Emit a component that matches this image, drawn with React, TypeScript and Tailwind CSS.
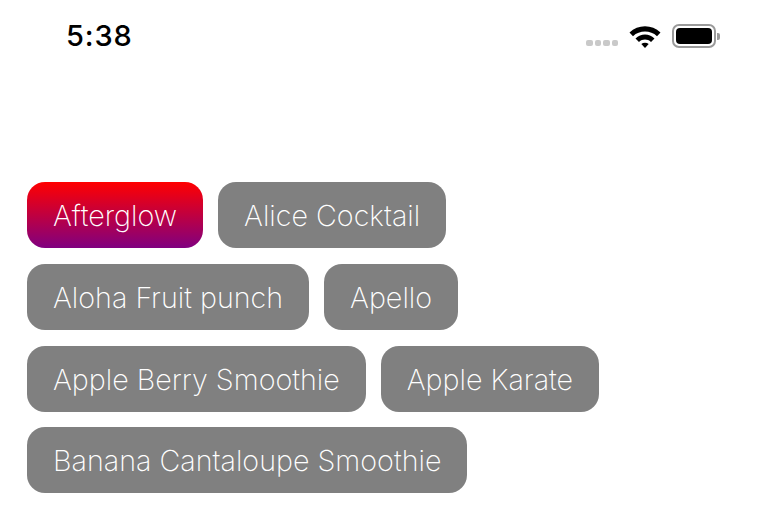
import React from "react";

const drinks = [
	"Afterglow",
	"Alice Cocktail",
	"Aloha Fruit punch",
	"Apello",
	"Apple Berry Smoothie",
	"Apple Karate",
	"Banana Cantaloupe Smoothie",
];

function StatusIcons() {
	return (
		<div className="flex items-center">
			<div className="flex gap-[2px] mt-[14px] mr-[11px]">
				<span className="w-[6.5px] h-[6.5px] rounded-[2px] bg-[#c9c9c9]" />
				<span className="w-[6.5px] h-[6.5px] rounded-[2px] bg-[#c9c9c9]" />
				<span className="w-[6.5px] h-[6.5px] rounded-[2px] bg-[#c9c9c9]" />
				<span className="w-[6.5px] h-[6.5px] rounded-[2px] bg-[#c9c9c9]" />
			</div>
			<svg width="32" height="24" viewBox="0 0 32 24" className="mr-[11px]">
				<path d="M0.5 8.5 C9 0 23 0 31.5 8.5 L28 12.2 C21.5 6 10.5 6 4 12.2 Z" fill="#000" />
				<path d="M6.5 14.5 C12 9.3 20 9.3 25.5 14.5 L22 18 C18.5 14.8 13.5 14.8 10 18 Z" fill="#000" />
				<path d="M12.3 20 C14.5 18.2 17.5 18.2 19.7 20 L16 24 Z" fill="#000" />
			</svg>
			<div className="w-[44px] h-[24px] rounded-[7px] border-2 border-[#9a9a9a] p-[2px]">
				<div className="w-full h-full rounded-[4px] bg-black" />
			</div>
			<span className="w-[3px] h-[7px] ml-[1px] rounded-r-[2px] bg-[#9a9a9a]" />
		</div>
	);
}

export default function App() {
	return (
		<div className="w-[765px] h-[505px] overflow-hidden bg-white font-['Inter',sans-serif]">
			<div className="flex items-center justify-between h-[72px] pl-[66px] pr-[45px]">
				<span className="text-[29px] font-[550] text-black tracking-[0.9px]">5:38</span>
				<StatusIcons />
			</div>
			<div className="flex flex-wrap gap-x-[15px] gap-y-[15.8px] pt-[110px] pl-[27px] pr-[100px]">
				{drinks.map((name, i) => (
					<button
						key={name}
						className={
							i === 0
								? "h-[66px] px-[26px] rounded-[18px] bg-linear-to-b/srgb from-[#ff0000] to-[#800080] text-white text-[28.7px] font-[250] pt-[1px]"
								: "h-[66px] px-[26px] rounded-[18px] bg-[#808080] text-white text-[28.7px] font-[250] pt-[1px]"
						}
					>
						{name}
					</button>
				))}
			</div>
		</div>
	);
}
